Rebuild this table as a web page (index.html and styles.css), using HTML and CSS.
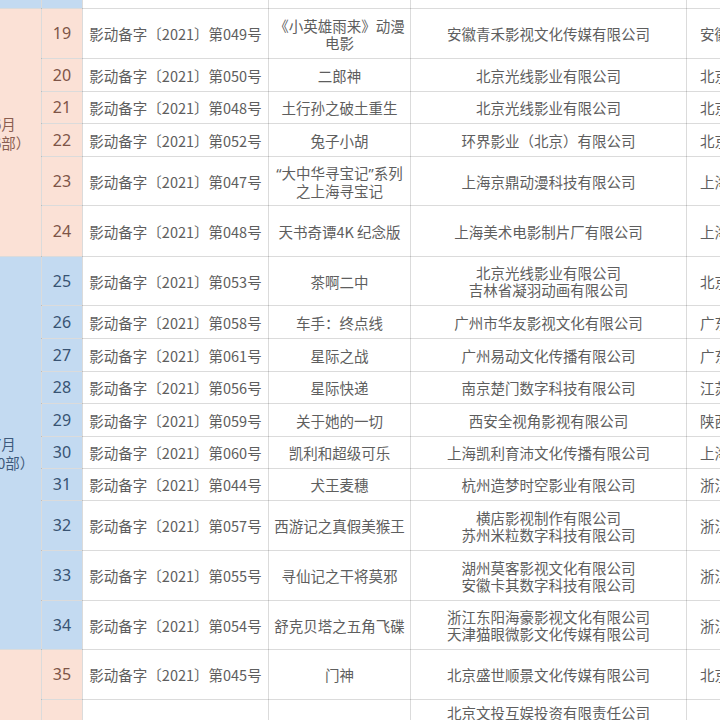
FILE: index.html
```html
<!DOCTYPE html>
<html lang="zh-CN">
<head>
<meta charset="utf-8">
<link rel="stylesheet" href="styles.css">
</head>
<body>
<div class="wrap">
<table class="grid">
<colgroup>
<col class="c-month"><col class="c-no"><col class="c-code"><col class="c-title"><col class="c-co"><col class="c-prov">
</colgroup>
<tbody>
<tr class="h-top"><td class="month blue"></td><td class="no blue"></td><td></td><td></td><td></td><td></td></tr>

<tr class="h50"><td class="month pink" rowspan="6">6月<br>（6部）</td><td class="no pink">19</td><td class="code">影动备字〔2021〕第049号</td><td class="title">《小英雄雨来》动漫<br>电影</td><td class="co">安徽青禾影视文化传媒有限公司</td><td class="prov">安徽省</td></tr>
<tr class="h33"><td class="no pink">20</td><td class="code">影动备字〔2021〕第050号</td><td class="title">二郎神</td><td class="co">北京光线影业有限公司</td><td class="prov">北京市</td></tr>
<tr class="h32"><td class="no pink">21</td><td class="code">影动备字〔2021〕第048号</td><td class="title">土行孙之破土重生</td><td class="co">北京光线影业有限公司</td><td class="prov">北京市</td></tr>
<tr class="h33"><td class="no pink">22</td><td class="code">影动备字〔2021〕第052号</td><td class="title">兔子小胡</td><td class="co">环界影业（北京）有限公司</td><td class="prov">北京市</td></tr>
<tr class="h49"><td class="no pink">23</td><td class="code">影动备字〔2021〕第047号</td><td class="title"><span class="q">“</span>大中华寻宝记<span class="q">”</span>系列<br>之上海寻宝记</td><td class="co">上海京鼎动漫科技有限公司</td><td class="prov">上海市</td></tr>
<tr class="h51"><td class="no pink">24</td><td class="code">影动备字〔2021〕第048号</td><td class="title">天书奇谭4K 纪念版</td><td class="co">上海美术电影制片厂有限公司</td><td class="prov">上海市</td></tr>

<tr class="h49"><td class="month blue" rowspan="10">7月<br>（10部）</td><td class="no blue">25</td><td class="code">影动备字〔2021〕第053号</td><td class="title">茶啊二中</td><td class="co">北京光线影业有限公司<br>吉林省凝羽动画有限公司</td><td class="prov">北京市</td></tr>
<tr class="h33"><td class="no blue">26</td><td class="code">影动备字〔2021〕第058号</td><td class="title">车手：终点线</td><td class="co">广州市华友影视文化有限公司</td><td class="prov">广东省</td></tr>
<tr class="h33"><td class="no blue">27</td><td class="code">影动备字〔2021〕第061号</td><td class="title">星际之战</td><td class="co">广州易动文化传播有限公司</td><td class="prov">广东省</td></tr>
<tr class="h32"><td class="no blue">28</td><td class="code">影动备字〔2021〕第056号</td><td class="title">星际快递</td><td class="co">南京楚门数字科技有限公司</td><td class="prov">江苏省</td></tr>
<tr class="h33"><td class="no blue">29</td><td class="code">影动备字〔2021〕第059号</td><td class="title">关于她的一切</td><td class="co">西安全视角影视有限公司</td><td class="prov">陕西省</td></tr>
<tr class="h32"><td class="no blue">30</td><td class="code">影动备字〔2021〕第060号</td><td class="title">凯利和超级可乐</td><td class="co">上海凯利育沛文化传播有限公司</td><td class="prov">上海市</td></tr>
<tr class="h32"><td class="no blue">31</td><td class="code">影动备字〔2021〕第044号</td><td class="title">犬王麦穗</td><td class="co">杭州造梦时空影业有限公司</td><td class="prov">浙江省</td></tr>
<tr class="h50"><td class="no blue">32</td><td class="code">影动备字〔2021〕第057号</td><td class="title">西游记之真假美猴王</td><td class="co">横店影视制作有限公司<br>苏州米粒数字科技有限公司</td><td class="prov">浙江省</td></tr>
<tr class="h50"><td class="no blue">33</td><td class="code">影动备字〔2021〕第055号</td><td class="title">寻仙记之干将莫邪</td><td class="co">湖州莫客影视文化有限公司<br>安徽卡其数字科技有限公司</td><td class="prov">浙江省</td></tr>
<tr class="h49"><td class="no blue">34</td><td class="code">影动备字〔2021〕第054号</td><td class="title">舒克贝塔之五角飞碟</td><td class="co">浙江东阳海豪影视文化有限公司<br>天津猫眼微影文化传媒有限公司</td><td class="prov">浙江省</td></tr>

<tr class="h50"><td class="month pink" rowspan="2"></td><td class="no pink">35</td><td class="code">影动备字〔2021〕第045号</td><td class="title">门神</td><td class="co">北京盛世顺景文化传媒有限公司</td><td class="prov">北京市</td></tr>
<tr class="h-last"><td class="no pink">36</td><td class="code">影动备字〔2021〕第062号</td><td class="title">新神榜</td><td class="co top">北京文投互娱投资有限责任公司<br>北京追光动画科技有限公司<br>阿里巴巴影业（北京）有限公司</td><td class="prov">北京市</td></tr>
</tbody>
</table>
</div>
</body>
</html>
```

FILE: styles.css
```css
html, body {
  margin: 0;
  padding: 0;
  background: #ffffff;
  overflow: hidden;
  width: 720px;
  height: 720px;
}

.wrap {
  margin-top: -24px;
  margin-left: -33px;
}

.grid {
  border-collapse: collapse;
  table-layout: fixed;
  width: 817px;
  font-family: "Noto Sans CJK SC", "Noto Sans", sans-serif;
  font-size: 14.5px;
  line-height: 17px;
  color: #5e5e5e;
}

.c-month { width: 74px; }
.c-no { width: 41px; }
.c-code { width: 186px; }
.c-title { width: 142px; }
.c-co { width: 276px; }
.c-prov { width: 98px; }

.grid td {
  border: 1.5px solid rgba(0, 0, 0, 0.14);
  padding: 0 2px;
  text-align: center;
  vertical-align: middle;
  white-space: nowrap;
  overflow: hidden;
}

.grid td.prov {
  text-align: left;
  padding-left: 13px;
}

.grid td.top {
  vertical-align: top;
  padding-top: 4px;
}

.q {
  font-family: "Noto Sans", "Liberation Sans", sans-serif;
}

.h-top { height: 32px; }
.h32 { height: 32px; }
.h33 { height: 33px; }
.h49 { height: 49px; }
.h50 { height: 50px; }
.h51 { height: 51px; }
.h-last { height: 80px; }

.pink { background: #fbe1d6; }
.blue { background: #c3daf1; }

.month {
  font-size: 14.5px;
  line-height: 19px;
}
.month.pink { color: #8a5e50; }
.month.blue { color: #3e5a7c; }

.no {
  font-size: 16px;
  font-family: "Noto Sans", "Noto Sans CJK SC", sans-serif;
}
.no.pink { color: #7e5447; }
.no.blue { color: #385373; }
```
